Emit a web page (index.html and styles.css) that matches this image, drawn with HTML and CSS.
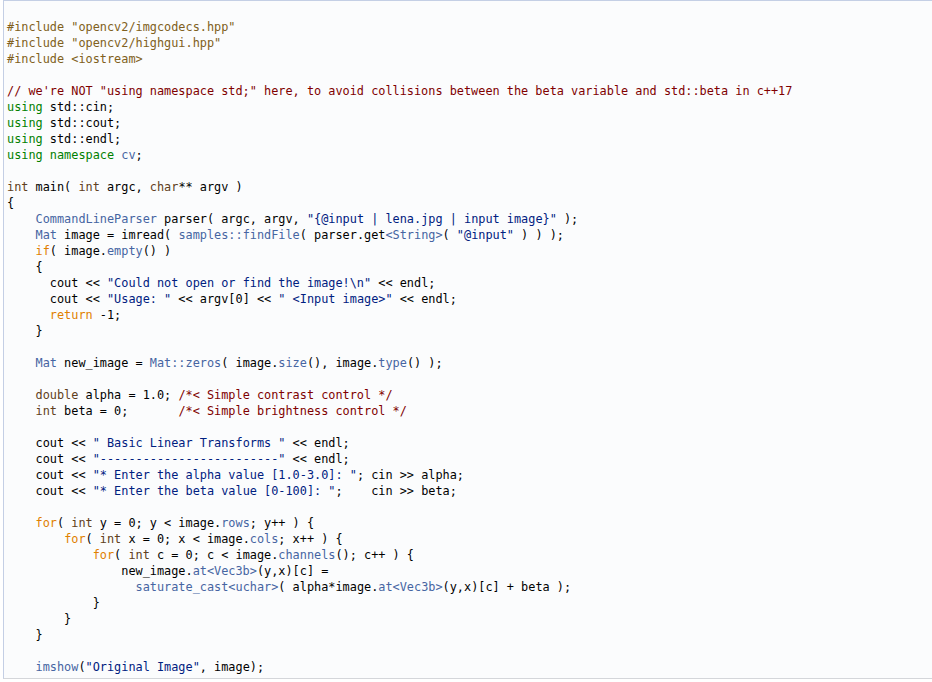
FILE: index.html
```html
<!DOCTYPE html>
<html>
<head>
<meta charset="utf-8">
<link rel="stylesheet" href="styles.css">
</head>
<body>
<div class="fragment">
<div class="line"><span class="pp">#include &quot;opencv2/imgcodecs.hpp&quot;</span></div>
<div class="line"><span class="pp">#include &quot;opencv2/highgui.hpp&quot;</span></div>
<div class="line"><span class="pp">#include &lt;iostream&gt;</span></div>
<div class="line"> </div>
<div class="line"><span class="cm">// we&#39;re NOT &quot;using namespace std;&quot; here, to avoid collisions between the beta variable and std::beta in c++17</span></div>
<div class="line"><span class="kw">using</span> std::cin;</div>
<div class="line"><span class="kw">using</span> std::cout;</div>
<div class="line"><span class="kw">using</span> std::endl;</div>
<div class="line"><span class="kw">using namespace </span><span class="ln">cv</span>;</div>
<div class="line"> </div>
<div class="line"><span class="kt">int</span> main( <span class="kt">int</span> argc, <span class="kt">char</span>** argv )</div>
<div class="line">{</div>
<div class="line">    <span class="ln">CommandLineParser</span> parser( argc, argv, <span class="st">&quot;{@input | lena.jpg | input image}&quot;</span> );</div>
<div class="line">    <span class="ln">Mat</span> image = imread( <span class="ln">samples::findFile</span>( parser.get<span class="ln">&lt;String&gt;</span>( <span class="st">&quot;@input&quot;</span> ) ) );</div>
<div class="line">    <span class="kf">if</span>( image.<span class="ln">empty</span>() )</div>
<div class="line">    {</div>
<div class="line">      cout &lt;&lt; <span class="st">&quot;Could not open or find the image!\n&quot;</span> &lt;&lt; endl;</div>
<div class="line">      cout &lt;&lt; <span class="st">&quot;Usage: &quot;</span> &lt;&lt; argv[0] &lt;&lt; <span class="st">&quot; &lt;Input image&gt;&quot;</span> &lt;&lt; endl;</div>
<div class="line">      <span class="kf">return</span> -1;</div>
<div class="line">    }</div>
<div class="line"> </div>
<div class="line">    <span class="ln">Mat</span> new_image = <span class="ln">Mat::zeros</span>( image.<span class="ln">size</span>(), image.<span class="ln">type</span>() );</div>
<div class="line"> </div>
<div class="line">    <span class="kt">double</span> alpha = 1.0; <span class="cm">/*&lt; Simple contrast control */</span></div>
<div class="line">    <span class="kt">int</span> beta = 0;       <span class="cm">/*&lt; Simple brightness control */</span></div>
<div class="line"> </div>
<div class="line">    cout &lt;&lt; <span class="st">&quot; Basic Linear Transforms &quot;</span> &lt;&lt; endl;</div>
<div class="line">    cout &lt;&lt; <span class="st">&quot;-------------------------&quot;</span> &lt;&lt; endl;</div>
<div class="line">    cout &lt;&lt; <span class="st">&quot;* Enter the alpha value [1.0-3.0]: &quot;</span>; cin &gt;&gt; alpha;</div>
<div class="line">    cout &lt;&lt; <span class="st">&quot;* Enter the beta value [0-100]: &quot;</span>;    cin &gt;&gt; beta;</div>
<div class="line"> </div>
<div class="line">    <span class="kf">for</span>( <span class="kt">int</span> y = 0; y &lt; image.<span class="ln">rows</span>; y++ ) {</div>
<div class="line">        <span class="kf">for</span>( <span class="kt">int</span> x = 0; x &lt; image.<span class="ln">cols</span>; x++ ) {</div>
<div class="line">            <span class="kf">for</span>( <span class="kt">int</span> c = 0; c &lt; image.<span class="ln">channels</span>(); c++ ) {</div>
<div class="line">                new_image.<span class="ln">at&lt;Vec3b&gt;</span>(y,x)[c] =</div>
<div class="line">                  <span class="ln">saturate_cast&lt;uchar&gt;</span>( alpha*image.<span class="ln">at&lt;Vec3b&gt;</span>(y,x)[c] + beta );</div>
<div class="line">            }</div>
<div class="line">        }</div>
<div class="line">    }</div>
<div class="line"> </div>
<div class="line">    <span class="ln">imshow</span>(<span class="st">&quot;Original Image&quot;</span>, image);</div>
</div>
</body>
</html>
```
FILE: styles.css
```css
html, body {
  margin: 0;
  padding: 0;
  background: #ffffff;
}

.fragment {
  margin-left: 3px;
  height: 656px;
  padding: 18px 0 3px 3px;
  background: #fbfcfd;
  border-top: 1px solid #c4cfe5;
  border-left: 1px solid #c4cfe5;
  border-bottom: 1px solid #d4d6da;
  font-family: "DejaVu Sans Mono", "Liberation Mono", monospace;
  font-size: 11.86px;
  color: #000000;
  overflow: hidden;
}

.line {
  white-space: pre;
  height: 16px;
  line-height: 16px;
}

.pp { color: #806020; }
.cm { color: #800000; }
.kw { color: #008000; }
.kt { color: #604020; }
.kf { color: #e08000; }
.st { color: #002080; }
.ln { color: #4665a2; }
```
